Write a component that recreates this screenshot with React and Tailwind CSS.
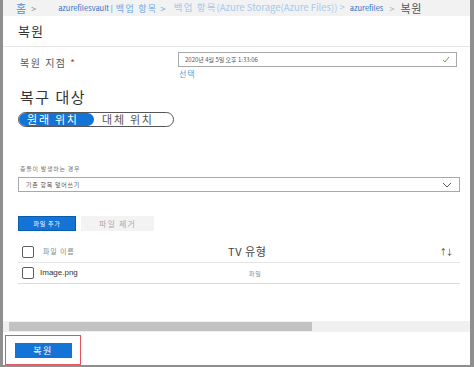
import React from 'react';

const font = { fontFamily: '"Noto Sans CJK KR", "Noto Sans", sans-serif' };

const Box = () => (
  <span className="block w-[12px] h-[12px] border border-[#605e5c] rounded-[2px] bg-white" />
);

const App = () => {
  return (
    <div className="w-[474px] h-[367px] bg-[#8f8f8f] pl-[3px] pr-[4px] pb-[2px] overflow-hidden" style={font}>
      <div className="h-full bg-white flex flex-col">
        <div className="h-[16px] bg-[#f2f2f2] flex items-center pl-[13px] text-[7px] leading-none whitespace-nowrap">
          <span className="text-[11px] text-[#4a90d9]">홈</span>
          <span className="text-[9px] text-[#8a8a8a] ml-[5px]">&gt;</span>
          <span className="text-[7.5px] text-[#2f76c8] ml-[22px]">azurefilesvault |</span>
          <span className="text-[9px] text-[#6aa6e6] ml-[3px] tracking-[0.14em]">백업 항목 &gt;</span>
          <span className="text-[9.5px] text-[#a7c9ee] ml-[7px]">
            <span className="tracking-[0.12em]">백업 항목</span>(Azure Storage(Azure Files)) &gt;
          </span>
          <span className="text-[7.5px] text-[#2f76c8] ml-[5px]">azurefiles</span>
          <span className="text-[9px] text-[#b0b0b0] ml-[6px]">&gt;</span>
          <span className="text-[11px] text-[#555] ml-[6px] tracking-[0.08em]">복원</span>
        </div>
        <div className="h-[31px] border-b border-[#e6e6e6] pl-[15px] flex items-center">
          <span className="text-[13px] text-[#333] tracking-[0.08em]">복원</span>
        </div>
        <div className="flex-1 px-[12px] flex flex-col">
          <div className="flex mt-[5px]">
            <div className="w-[163px] pl-[5px] pt-[6px] text-[10px] text-[#555] leading-none tracking-[0.15em]">
              복원 지점 <span className="text-[#c0392b]">*</span>
            </div>
            <div className="flex-1">
              <div className="h-[15px] w-[279px] border border-[#a8a8a8] flex items-center px-[6px] justify-between">
                <span className="text-[6px] text-[#555] leading-none">2020년 4월 5일 오후 1:33:06</span>
                <svg width="8" height="7" viewBox="0 0 8 7"><path d="M1 4l2 2 4-5" fill="none" stroke="#5aaa4a" strokeWidth="1" /></svg>
              </div>
              <div className="text-[8px] text-[#5a9ee0] leading-none mt-[3px] ml-[1px] tracking-[0.1em]">선택</div>
            </div>
          </div>
          <div className="text-[15px] text-[#333] leading-none mt-[11px] ml-[5px] tracking-[0.1em]">복구 대상</div>
          <div className="mt-[8px] ml-[3px] w-[156px] h-[15px] rounded-full border border-[#555] flex items-center text-[11px] leading-none tracking-[0.16em]">
            <span className="h-full w-[75px] bg-[#1473d6] text-white rounded-full flex items-center pl-[8px]">원래 위치</span>
            <span className="text-[#555] ml-[8px]">대체 위치</span>
          </div>
          <div className="text-[6px] text-[#777] leading-none mt-[39px] ml-[5px] tracking-[0.12em]">충돌이 발생하는 경우</div>
          <div className="mt-[5px] ml-[3px] w-[442px] h-[15px] border border-[#a8a8a8] flex items-center justify-between px-[7px]">
            <span className="text-[6px] text-[#555] leading-none tracking-[0.12em]">기존 항목 덮어쓰기</span>
            <svg width="10" height="6" viewBox="0 0 10 6"><path d="M1 1l4 4 4-4" fill="none" stroke="#444" strokeWidth="0.9" /></svg>
          </div>
          <div className="flex mt-[24px] ml-[3px] gap-[5px]">
            <button className="w-[58px] h-[15px] bg-[#1473d6] border border-[#0b5cad] text-white text-[6px] leading-none tracking-[0.12em]">파일 추가</button>
            <button className="w-[73px] h-[15px] bg-[#f3f3f3] text-[#aaa] text-[8px] leading-none tracking-[0.15em]">파일 제거</button>
          </div>
          <div className="ml-[3px] w-[442px] mt-[10px]">
            <div className="h-[22px] border-b border-[#e6e6e6] flex items-center pl-[4px]">
              <Box />
              <span className="text-[7px] text-[#888] ml-[9px] w-[185px] tracking-[0.12em]">파일 이름</span>
              <span className="text-[11px] text-[#444] tracking-[0.05em]">TV 유형</span>
              <span className="ml-auto mr-[8px] text-[8px] text-[#444] tracking-[-0.2em]">↑↓</span>
            </div>
            <div className="h-[21px] border-b border-[#dcdcdc] flex items-center pl-[4px]">
              <Box />
              <span className="text-[8px] text-[#333] ml-[6px] w-[209px]" style={{ fontFamily: '"Liberation Sans", sans-serif' }}>Image.png</span>
              <span className="text-[6px] text-[#888] tracking-[0.12em]">파일</span>
            </div>
          </div>
          <div className="flex-1" />
        </div>
        <div className="h-[11px] bg-[#f0f0f0] flex items-center">
          <span className="w-[6px]" />
          <span className="w-[303px] h-[9px] bg-[#c2c2c2]" />
        </div>
        <div className="h-[33px] flex items-start pt-[3px] pl-[2px]">
          <div className="w-[76px] h-[30px] border border-[#e0555f] flex items-center justify-center">
            <button className="w-[57px] h-[15px] bg-[#1473d6] text-white text-[9px] leading-none tracking-[0.15em]">복원</button>
          </div>
        </div>
      </div>
    </div>
  );
};

export default App;
